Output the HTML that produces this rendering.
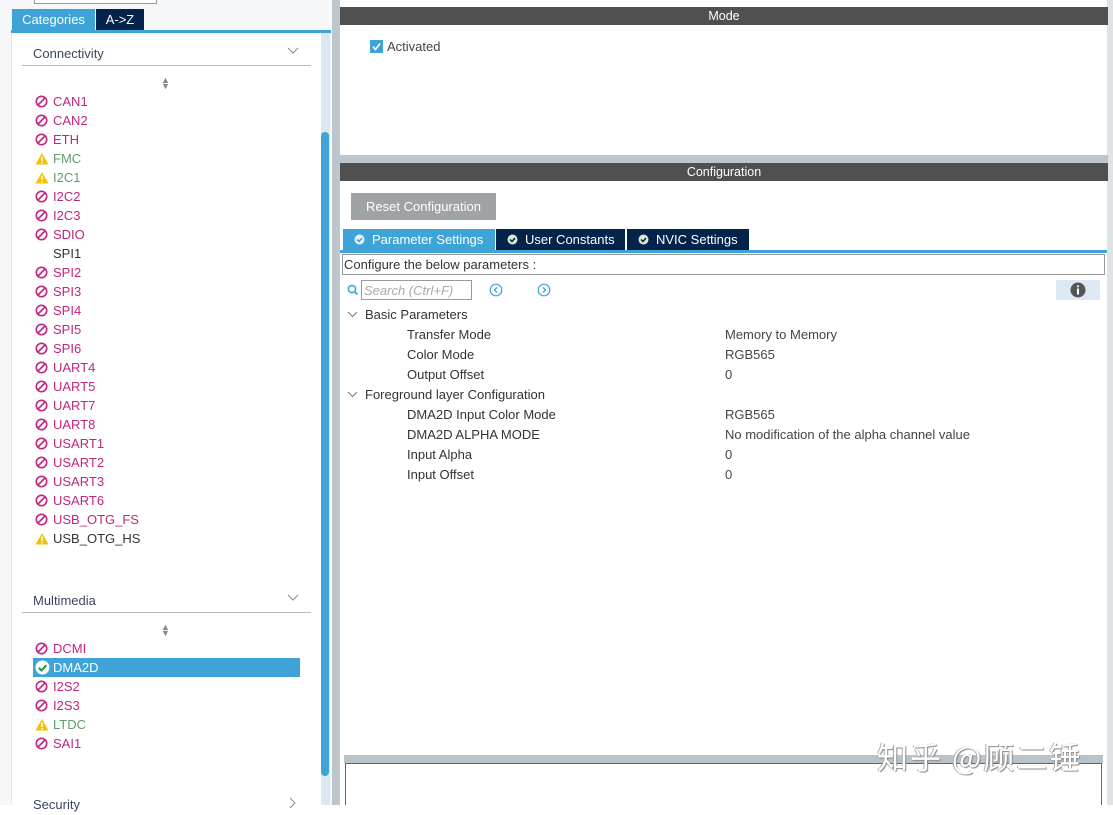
<!DOCTYPE html>
<html><head><meta charset="utf-8"><style>
*{margin:0;padding:0;box-sizing:border-box}
body{width:1113px;height:805px;overflow:hidden;background:#fff;font-family:"Liberation Sans","Noto Sans CJK SC",sans-serif;font-size:13px;color:#333;position:relative}
.a{position:absolute}
.it{position:absolute;left:35px;height:19px;line-height:19px;white-space:nowrap}
.it svg{position:absolute;left:0;top:3px}
.it span{position:absolute;left:18px}
.p{color:#c0267d}.g{color:#5b9f6a}.k{color:#333}
.lbl{position:absolute;line-height:20px;white-space:nowrap}
</style></head><body>
<div class="a" style="left:0;top:0;width:332px;height:805px;background:#f6f7f8"></div>
<div class="a" style="left:11px;top:32px;width:310px;height:773px;background:#fff;border-left:1px solid #e6e8ea"></div>
<div class="a" style="left:34px;top:0;width:123px;height:4px;border:1px solid #999;border-top:none;background:#fff"></div>
<div class="a" style="left:12px;top:9px;width:83px;height:21px;background:#3ea3d6;color:#fff;line-height:21px;text-align:center;font-size:13px">Categories</div>
<div class="a" style="left:96px;top:9px;width:48px;height:21px;background:#03234b;color:#fff;line-height:21px;text-align:center;font-size:13px">A-&gt;Z</div>
<div class="a" style="left:11px;top:30px;width:320px;height:3px;background:#3ea3d6"></div>
<div class="a" style="left:321px;top:33px;width:9px;height:772px;background:#dbe8f3"></div>
<div class="a" style="left:321px;top:132px;width:8px;height:644px;background:#3ea3d6;border-radius:4px"></div>
<div class="a" style="left:332px;top:0;width:8px;height:805px;background:#bcc6cc"></div>

<div class="lbl" style="left:33px;top:44px;color:#3a4660;font-size:13px">Connectivity</div>
<svg class="a" style="left:287px;top:47px" width="12" height="8"><path d="M1 1l5 5 5-5" stroke="#888" stroke-width="1" fill="none"/></svg>
<div class="a" style="left:22px;top:65px;width:289px;height:1px;background:#bbb"></div>
<div class="a" style="left:161px;top:77px;color:#888;font-size:9px;line-height:6px">▲<br>▼</div>

<div class="lbl" style="left:33px;top:591px;color:#3a4660">Multimedia</div>
<svg class="a" style="left:287px;top:594px" width="12" height="8"><path d="M1 1l5 5 5-5" stroke="#888" stroke-width="1" fill="none"/></svg>
<div class="a" style="left:22px;top:612px;width:289px;height:1px;background:#bbb"></div>
<div class="a" style="left:161px;top:624px;color:#888;font-size:9px;line-height:6px">▲<br>▼</div>
<div class="lbl" style="left:33px;top:795px;color:#3a4660">Security</div>
<svg class="a" style="left:289px;top:797px" width="8" height="12"><path d="M1 1l5 5-5 5" stroke="#888" stroke-width="1" fill="none"/></svg>

<div class="a" style="left:33px;top:658px;width:267px;height:19px;background:#3ea3d6"></div>

<div id="list"></div>

<div class="a" style="left:340px;top:0;width:767px;height:805px;background:#fff"></div>
<div class="a" style="left:1107px;top:0;width:6px;height:805px;background:#dfe3e6"></div>
<div class="a" style="left:340px;top:7px;width:768px;height:18px;background:#4f5151;color:#fff;text-align:center;line-height:18px;font-size:12.5px">Mode</div>
<div class="a" style="left:370px;top:40px;width:13px;height:13px;background:#3ea3d6"><svg width="13" height="13"><path d="M3 6.5l2.5 3L10 3.5" stroke="#fff" stroke-width="1.6" fill="none"/></svg></div>
<div class="lbl" style="left:387px;top:37px;color:#444">Activated</div>
<div class="a" style="left:340px;top:155px;width:768px;height:8px;background:#bcc6cc"></div>
<div class="a" style="left:340px;top:163px;width:768px;height:18px;background:#4f5151;color:#fff;text-align:center;line-height:18px;font-size:12.5px">Configuration</div>
<div class="a" style="left:351px;top:193px;width:145px;height:27px;background:#9ea3a6;color:#fff;text-align:center;line-height:27px;font-size:13px">Reset Configuration</div>
<div class="a" style="left:343px;top:229px;width:152px;height:21px;background:#3ea3d6;color:#fff;line-height:21px;font-size:13px;padding-left:29px">Parameter Settings</div>
<div class="a" style="left:496px;top:229px;width:129px;height:21px;background:#03234b;color:#fff;line-height:21px;font-size:13px;padding-left:29px">User Constants</div>
<div class="a" style="left:627px;top:229px;width:122px;height:21px;background:#03234b;color:#fff;line-height:21px;font-size:13px;padding-left:29px">NVIC Settings</div>
<svg class="a" style="left:354px;top:234px" width="11" height="11"><circle cx="5.5" cy="5.5" r="5" fill="#e8f0f4"/><path d="M3 5.5l2 2 3-3.5" stroke="#3ea3d6" stroke-width="1.5" fill="none"/></svg>
<svg class="a" style="left:507px;top:234px" width="11" height="11"><circle cx="5.5" cy="5.5" r="5" fill="#d9ead0"/><path d="M3 5.5l2 2 3-3.5" stroke="#03234b" stroke-width="1.5" fill="none"/></svg>
<svg class="a" style="left:638px;top:234px" width="11" height="11"><circle cx="5.5" cy="5.5" r="5" fill="#d9ead0"/><path d="M3 5.5l2 2 3-3.5" stroke="#03234b" stroke-width="1.5" fill="none"/></svg>
<div class="a" style="left:340px;top:250px;width:767px;height:3px;background:#3ea3d6"></div>
<div class="a" style="left:342px;top:254px;width:763px;height:21px;border:1px solid #999;line-height:20px;padding-left:1px;color:#333">Configure the below parameters :</div>
<svg class="a" style="left:347px;top:284px" width="12" height="12"><circle cx="5" cy="5" r="3.6" stroke="#3ea3d6" stroke-width="1.6" fill="none"/><path d="M7.5 7.5l3 3" stroke="#3ea3d6" stroke-width="1.8"/></svg>
<div class="a" style="left:361px;top:280px;width:111px;height:20px;border:1px solid #999;color:#aaa;font-style:italic;line-height:19px;padding-left:2px">Search (Ctrl+F)</div>
<svg class="a" style="left:489px;top:283px" width="14" height="14"><circle cx="7" cy="7" r="5.8" stroke="#3ea3d6" stroke-width="1.2" fill="none"/><path d="M8 4.5L5.5 7 8 9.5" stroke="#3ea3d6" stroke-width="1.3" fill="none"/></svg>
<svg class="a" style="left:537px;top:283px" width="14" height="14"><circle cx="7" cy="7" r="5.8" stroke="#3ea3d6" stroke-width="1.2" fill="none"/><path d="M6 4.5L8.5 7 6 9.5" stroke="#3ea3d6" stroke-width="1.3" fill="none"/></svg>
<div class="a" style="left:1056px;top:280px;width:44px;height:20px;background:#dce8f3"></div>
<svg class="a" style="left:1070px;top:282px" width="16" height="16"><circle cx="8" cy="8" r="7.5" fill="#555"/><rect x="7" y="6.5" width="2" height="6" fill="#fff"/><circle cx="8" cy="4.3" r="1.1" fill="#fff"/></svg>

<svg class="a" style="left:347px;top:311px" width="11" height="7"><path d="M1 1l4.5 4.5L10 1" stroke="#777" stroke-width="1" fill="none"/></svg>
<div class="lbl" style="left:365px;top:305px">Basic Parameters</div>
<div class="lbl" style="left:407px;top:325px">Transfer Mode</div>
<div class="lbl" style="left:407px;top:345px">Color Mode</div>
<div class="lbl" style="left:407px;top:365px">Output Offset</div>
<svg class="a" style="left:347px;top:391px" width="11" height="7"><path d="M1 1l4.5 4.5L10 1" stroke="#777" stroke-width="1" fill="none"/></svg>
<div class="lbl" style="left:365px;top:385px">Foreground layer Configuration</div>
<div class="lbl" style="left:407px;top:405px">DMA2D Input Color Mode</div>
<div class="lbl" style="left:407px;top:425px">DMA2D ALPHA MODE</div>
<div class="lbl" style="left:407px;top:445px">Input Alpha</div>
<div class="lbl" style="left:407px;top:465px">Input Offset</div>
<div class="lbl" style="left:725px;top:325px;color:#444">Memory to Memory</div>
<div class="lbl" style="left:725px;top:345px;color:#444">RGB565</div>
<div class="lbl" style="left:725px;top:365px;color:#444">0</div>
<div class="lbl" style="left:725px;top:405px;color:#444">RGB565</div>
<div class="lbl" style="left:725px;top:425px;color:#444">No modification of the alpha channel value</div>
<div class="lbl" style="left:725px;top:445px;color:#444">0</div>
<div class="lbl" style="left:725px;top:465px;color:#444">0</div>

<div class="a" style="left:344px;top:755px;width:759px;height:8px;background:#b8c3ca"></div>
<div class="a" style="left:345px;top:763px;width:757px;height:42px;border:1px solid #666;border-bottom:none;background:#fff"></div>
<div class="a" style="left:877px;top:736px;font-size:31px;line-height:40px;color:#fff;text-shadow:1px 1px 1px #888,-1px 0 0 #aaa;font-family:'Noto Sans CJK SC',sans-serif;letter-spacing:2px">知乎 @顾二锤</div>

<script>
var no='<svg width="13" height="13"><circle cx="6.5" cy="6.5" r="5.2" stroke="#c0267d" stroke-width="1.6" fill="none"/><path d="M3 10L10 3" stroke="#c0267d" stroke-width="1.6"/></svg>';
var wa='<svg width="14" height="13"><path d="M7 1L13.5 12.5H0.5Z" fill="#f2c200"/><rect x="6.3" y="4.5" width="1.4" height="4.5" fill="#fff"/><rect x="6.3" y="10" width="1.4" height="1.4" fill="#fff"/></svg>';
var ok='<svg width="15" height="15" style="top:2px"><circle cx="7.5" cy="7.5" r="7" fill="#fff"/><path d="M3.8 7.8l2.6 2.6 5-5.2" stroke="#2e9e4a" stroke-width="2.2" fill="none"/></svg>';
var A=[["CAN1",no,"p"],["CAN2",no,"p"],["ETH",no,"p"],["FMC",wa,"g"],["I2C1",wa,"g"],["I2C2",no,"p"],["I2C3",no,"p"],["SDIO",no,"p"],["SPI1","","k"],["SPI2",no,"p"],["SPI3",no,"p"],["SPI4",no,"p"],["SPI5",no,"p"],["SPI6",no,"p"],["UART4",no,"p"],["UART5",no,"p"],["UART7",no,"p"],["UART8",no,"p"],["USART1",no,"p"],["USART2",no,"p"],["USART3",no,"p"],["USART6",no,"p"],["USB_OTG_FS",no,"p"],["USB_OTG_HS",wa,"k"]];
var B=[["DCMI",no,"p"],["DMA2D",ok,"w"],["I2S2",no,"p"],["I2S3",no,"p"],["LTDC",wa,"g"],["SAI1",no,"p"]];
var h="";
A.forEach(function(e,i){h+='<div class="it '+e[2]+'" style="top:'+(92+i*19)+'px">'+e[1]+'<span>'+e[0]+'</span></div>';});
B.forEach(function(e,i){h+='<div class="it '+e[2]+'" style="top:'+(639+i*19)+'px;'+(e[2]=="w"?"color:#fff":"")+'">'+e[1]+'<span>'+e[0]+'</span></div>';});
document.getElementById("list").innerHTML=h;
</script>
</body></html>
